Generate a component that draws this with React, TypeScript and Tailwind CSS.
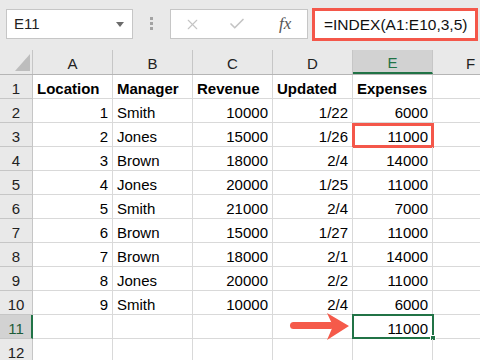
import { X, Check } from 'lucide-react';

const cols = ['A', 'B', 'C', 'D', 'E', 'F'];

// [A, B, C, D, E] per row; numbers and dates right aligned
const rows: (string | number)[][] = [
  ['Location', 'Manager', 'Revenue', 'Updated', 'Expenses'],
  [1, 'Smith', 10000, '1/22', 6000],
  [2, 'Jones', 15000, '1/26', 11000],
  [3, 'Brown', 18000, '2/4', 14000],
  [4, 'Jones', 20000, '1/25', 11000],
  [5, 'Smith', 21000, '2/4', 7000],
  [6, 'Brown', 15000, '1/27', 11000],
  [7, 'Brown', 18000, '2/1', 14000],
  [8, 'Jones', 20000, '2/2', 11000],
  [9, 'Smith', 10000, '2/4', 6000],
  ['', '', '', '', 11000],
  ['', '', '', '', ''],
];

function Arrow() {
  return (
    <svg
      className="absolute left-[16px] top-[-2px] pointer-events-none"
      width="64"
      height="30"
      viewBox="0 0 64 30"
    >
      <rect x="1" y="9" width="44" height="7" rx="3.5" fill="#f55a4a" />
      <path d="M38 0 L60 13 L38 27 L44 13 Z" fill="#f55a4a" />
    </svg>
  );
}

export default function App() {
  return (
    <div className="w-[480px] h-[360px] overflow-hidden bg-white font-['Liberation_Sans',Arial,sans-serif] text-black">
      {/* formula bar */}
      <div className="h-[50px] bg-[#e9e9e9] flex items-start pt-[9px] pl-[6px]">
        <div className="w-[127px] h-[30px] bg-white border border-[#c6c6c6] flex items-center pl-[7px] pr-[8px]">
          <span className="text-[15px] text-[#222] flex-1">E11</span>
          <svg width="8" height="5" viewBox="0 0 8 5">
            <path d="M0 0 H8 L4 5 Z" fill="#6b6b6b" />
          </svg>
        </div>
        <div className="ml-[17px] mt-[8px] flex flex-col gap-[2px]">
          <div className="w-[3px] h-[3px] bg-[#a3a3a3]" />
          <div className="w-[3px] h-[3px] bg-[#a3a3a3]" />
          <div className="w-[3px] h-[3px] bg-[#a3a3a3]" />
        </div>
        <div className="ml-[17px] w-[138px] h-[30px] bg-white border border-[#c6c6c6] flex items-center pl-[13px]">
          <X className="w-[17px] h-[17px] text-[#c4c4c4]" strokeWidth={1.6} />
          <Check className="ml-[27px] w-[18px] h-[18px] text-[#c4c4c4]" strokeWidth={2.2} />
          <span className="ml-[33px] font-['Liberation_Serif',serif] italic text-[17px] text-[#555]">fx</span>
        </div>
        <div className="ml-[4px] -mt-[1px] w-[166px] h-[33px] bg-white border-[3px] border-[#f4574a] flex items-center pl-[9px]">
          <span className="text-[15.5px] text-[#111]">=INDEX(A1:E10,3,5)</span>
        </div>
      </div>

      {/* column headers */}
      <div className="flex h-[24px] bg-[#e9e9e9] border-b border-[#b5b5b5] box-content">
        <div className="w-[33px] border-r border-[#c6c6c6] relative">
          <svg className="absolute left-[15px] top-[4px]" width="16" height="17" viewBox="0 0 16 17">
            <path d="M15 0 V17 H0 Z" fill="#bdbdbd" />
          </svg>
        </div>
        {cols.map((c) => (
          <div
            key={c}
            className={
              c === 'E'
                ? 'w-[80px] bg-[#d2d2d2] border-r border-[#c6c6c6] border-b-2 border-b-[#217346] flex items-end justify-center text-[15px] leading-[18px] text-[#217346]'
                : c === 'F'
                ? 'flex-1 flex items-end justify-center pb-[1px] text-[15px] leading-[18px] text-[#222] pl-[28px] overflow-hidden'
                : 'w-[80px] border-r border-[#c6c6c6] flex items-end justify-center pb-[1px] text-[15px] leading-[18px] text-[#222]'
            }
          >
            {c}
          </div>
        ))}
      </div>

      {/* rows */}
      {rows.map((r, i) => {
        const n = i + 1;
        return (
          <div key={n} className="flex h-[24px]">
            <div
              className={
                n === 11
                  ? 'w-[33px] bg-[#d2d2d2] border-r-2 border-r-[#217346] border-b border-b-[#c6c6c6] flex items-end justify-center pl-[1px] text-[15px] leading-[18px] text-[#1d5c38]'
                  : 'w-[33px] bg-[#e9e9e9] border-r border-[#c6c6c6] border-b flex items-end justify-center text-[15px] leading-[18px] text-[#222]'
              }
            >
              {n}
            </div>
            {r.map((v, j) => {
              const right = n > 1 && (typeof v === 'number' || j === 3);
              return (
                <div
                  key={j}
                  className={
                    'relative w-[80px] border-r border-b border-[#d9d9d9] flex items-end px-[4px] text-[15px] leading-[18px] whitespace-nowrap ' +
                    (right ? 'justify-end ' : 'justify-start ') +
                    (n === 1 ? 'font-bold' : '')
                  }
                >
                  {v}
                  {n === 3 && j === 4 && (
                    <div className="absolute left-[-1px] top-0 w-[82px] h-[25px] border-[3px] border-[#f4574a]" />
                  )}
                  {n === 11 && j === 4 && (
                    <div className="absolute left-[-1px] top-[-1px] w-[82px] h-[25px] border-2 border-[#217346]">
                      <div className="absolute right-[-4px] bottom-[-4px] w-[6px] h-[6px] bg-[#217346] border border-white" />
                    </div>
                  )}
                  {n === 11 && j === 3 && <Arrow />}
                </div>
              );
            })}
            <div className="flex-1 border-b border-[#d9d9d9]" />
          </div>
        );
      })}
    </div>
  );
}
